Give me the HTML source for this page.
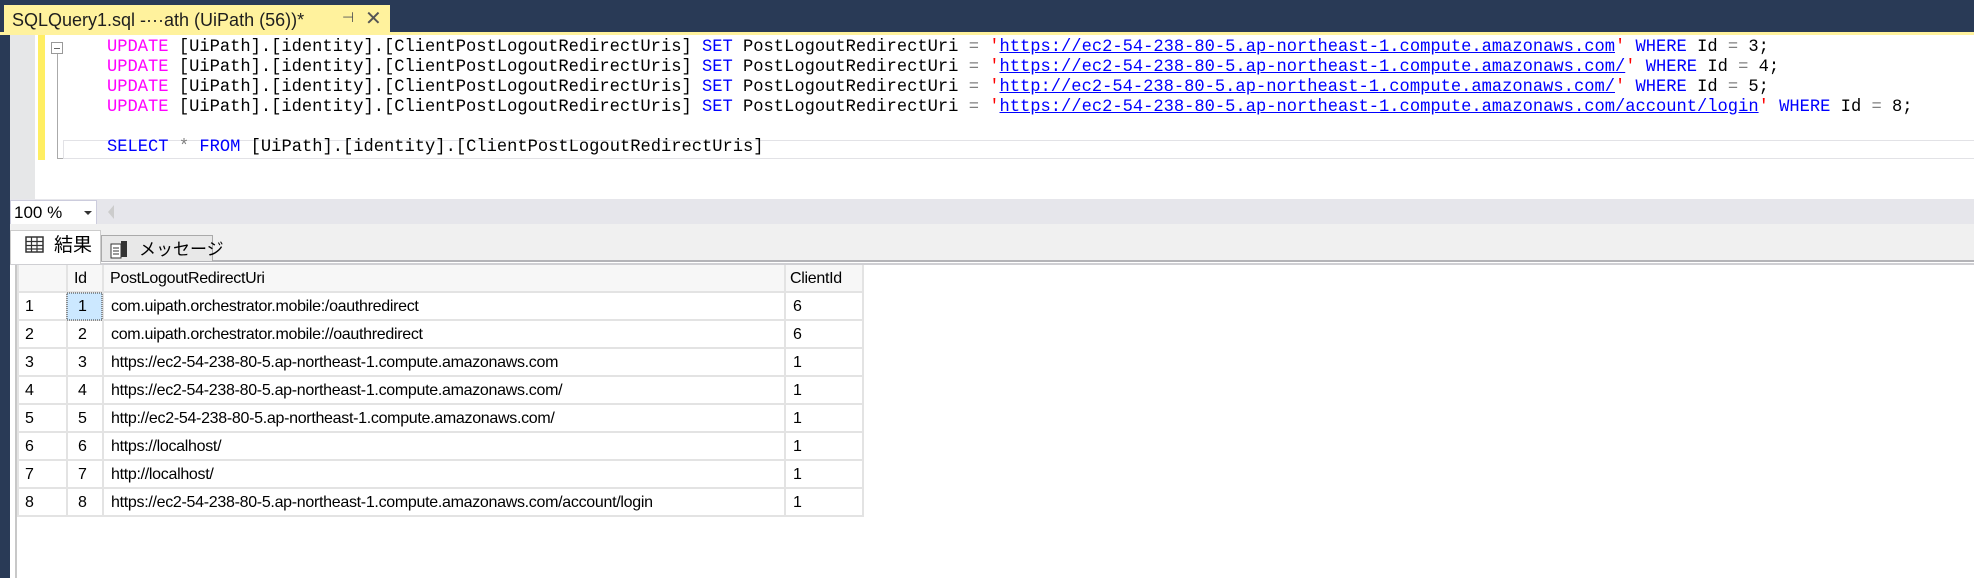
<!DOCTYPE html>
<html><head><meta charset="utf-8"><style>
*{margin:0;padding:0;box-sizing:border-box}
body{width:1974px;height:578px;position:relative;overflow:hidden;background:#fff;font-family:"Liberation Sans","Noto Sans CJK JP",sans-serif}
.a{position:absolute}
.code{position:absolute;left:107px;font-family:"Liberation Mono",monospace;font-size:17.1px;line-height:20px;white-space:pre;color:#000}
.k{color:#0000ff}.m{color:#ff00ff}.r{color:#ff0000}.u{color:#0000ff;text-decoration:underline}.g{color:#808080}
.cell{position:absolute;font-size:16px;line-height:27px;color:#000;white-space:nowrap;letter-spacing:-0.3px}
</style></head><body>
<div class="a" style="left:0;top:0;width:1974px;height:34px;background:#293a56"></div>
<div class="a" style="left:0;top:0;width:10px;height:578px;background:#293a56"></div>
<div class="a" style="left:4px;top:5px;width:386px;height:30px;background:#fff29d"></div>
<div class="a" style="left:0;top:32px;width:1974px;height:3px;background:#fff29d"></div>
<div class="a" style="left:12px;top:8px;font-size:18px;line-height:24px;color:#1e1e1e;white-space:nowrap">SQLQuery1.sql -···ath (UiPath (56))*</div>
<div class="a" style="left:342px;top:9px;font-size:14px;color:#555">⊣</div>
<div class="a" style="left:365px;top:6px;font-size:20px;color:#555">✕</div>
<!-- editor -->
<div class="a" style="left:10px;top:35px;width:25px;height:164px;background:#e6e7e8"></div>
<div class="a" style="left:38px;top:35px;width:7px;height:125px;background:#ffee62"></div>
<div class="a" style="left:51px;top:42px;width:12px;height:12px;border:1px solid #999;background:#fff"></div>
<div class="a" style="left:54px;top:48px;width:6px;height:1px;background:#666"></div>
<div class="a" style="left:57px;top:54px;width:1px;height:104px;background:#aaa"></div>
<div class="a" style="left:57px;top:158px;width:6px;height:1px;background:#aaa"></div>
<div class="a" style="left:63px;top:140px;width:1911px;height:19px;border:1px solid #e2e2e6;border-right:none"></div>
<div class="code" style="top:38px"><span class="m">UPDATE</span> [UiPath].[identity].[ClientPostLogoutRedirectUris] <span class="k">SET</span> PostLogoutRedirectUri <span class="g">=</span> <span class="r">'</span><span class="u">https://ec2-54-238-80-5.ap-northeast-1.compute.amazonaws.com</span><span class="r">'</span> <span class="k">WHERE</span> Id <span class="g">=</span> 3;
<span class="m">UPDATE</span> [UiPath].[identity].[ClientPostLogoutRedirectUris] <span class="k">SET</span> PostLogoutRedirectUri <span class="g">=</span> <span class="r">'</span><span class="u">https://ec2-54-238-80-5.ap-northeast-1.compute.amazonaws.com/</span><span class="r">'</span> <span class="k">WHERE</span> Id <span class="g">=</span> 4;
<span class="m">UPDATE</span> [UiPath].[identity].[ClientPostLogoutRedirectUris] <span class="k">SET</span> PostLogoutRedirectUri <span class="g">=</span> <span class="r">'</span><span class="u">http://ec2-54-238-80-5.ap-northeast-1.compute.amazonaws.com/</span><span class="r">'</span> <span class="k">WHERE</span> Id <span class="g">=</span> 5;
<span class="m">UPDATE</span> [UiPath].[identity].[ClientPostLogoutRedirectUris] <span class="k">SET</span> PostLogoutRedirectUri <span class="g">=</span> <span class="r">'</span><span class="u">https://ec2-54-238-80-5.ap-northeast-1.compute.amazonaws.com/account/login</span><span class="r">'</span> <span class="k">WHERE</span> Id <span class="g">=</span> 8;

<span class="k">SELECT</span> <span class="g">*</span> <span class="k">FROM</span> [UiPath].[identity].[ClientPostLogoutRedirectUris]</div>
<!-- zoom bar -->
<div class="a" style="left:10px;top:199px;width:1964px;height:25px;background:#e6e6eb"></div>
<div class="a" style="left:10px;top:200px;width:87px;height:25px;background:#fff;border:1px solid #ccd"></div>
<div class="a" style="left:14px;top:202px;font-size:17px;line-height:21px">100 %</div>
<div class="a" style="left:84px;top:211px;width:0;height:0;border-left:4px solid transparent;border-right:4px solid transparent;border-top:4px solid #333"></div>
<div class="a" style="left:108px;top:205px;width:0;height:0;border-top:7px solid transparent;border-bottom:7px solid transparent;border-right:6px solid #ccc"></div>
<!-- tabs -->
<div class="a" style="left:10px;top:224px;width:1964px;height:37px;background:#f0f0f0"></div>
<div class="a" style="left:10px;top:260px;width:1964px;height:2px;background:#b4b4b8"></div>
<div class="a" style="left:10px;top:263px;width:1964px;height:2px;background:#cfcfd3"></div>
<div class="a" style="left:10px;top:230px;width:91px;height:34px;background:#fff;border:1px solid #ccc;border-bottom:none"></div>
<div class="a" style="left:101px;top:235px;width:112px;height:26px;background:#e8e8e8;border:1px solid #aaa;border-bottom:none"></div>
<svg class="a" style="left:25px;top:236px" width="20" height="18"><rect x="1" y="1" width="17" height="15" fill="#fff" stroke="#333" stroke-width="1.5"/><path d="M1 5.5H18M1 9.5H18M1 13H18M6.5 1V16M12 1V16" stroke="#333" stroke-width="1.2"/></svg>
<div class="a" style="left:54px;top:233px;font-size:19px;line-height:26px">結果</div>
<svg class="a" style="left:110px;top:240px" width="20" height="20"><rect x="1" y="4" width="10" height="14" fill="#fff" stroke="#333"/><path d="M3 8H9M3 11H9M3 14H9" stroke="#333"/><rect x="11" y="1" width="6" height="16" fill="#333"/></svg>
<div class="a" style="left:139px;top:238px;font-size:17px;line-height:24px">メッセージ</div>
<!-- grid -->
<div class="a" style="left:17px;top:265px;width:847px;height:252px;background:#fff"></div>
<svg class="a" style="left:17px;top:265px" width="850" height="254">
<rect x="0" y="0" width="846" height="27" fill="#f7f7f7"/>
<g stroke="#e3e3e3" stroke-width="2">
<path d="M1 0V252M50 0V252M86 0V252M768 0V252M846 0V252"/>
<path d="M0 27H846M0 55H846M0 83H846M0 111H846M0 139H846M0 167H846M0 195H846M0 223H846M0 251H846"/>
</g>
<rect x="50" y="28" width="35" height="27" fill="#cce8ff" stroke="#333" stroke-dasharray="1 1"/>
</svg>
<div class="cell" style="left:74px;top:265px">Id</div>
<div class="cell" style="left:110px;top:265px">PostLogoutRedirectUri</div>
<div class="cell" style="left:790px;top:265px">ClientId</div>
<div class="cell" style="left:25px;top:293px">1</div><div class="cell" style="left:78px;top:293px">1</div><div class="cell" style="left:111px;top:293px">com.uipath.orchestrator.mobile:/oauthredirect</div><div class="cell" style="left:793px;top:293px">6</div>
<div class="cell" style="left:25px;top:321px">2</div><div class="cell" style="left:78px;top:321px">2</div><div class="cell" style="left:111px;top:321px">com.uipath.orchestrator.mobile://oauthredirect</div><div class="cell" style="left:793px;top:321px">6</div>
<div class="cell" style="left:25px;top:349px">3</div><div class="cell" style="left:78px;top:349px">3</div><div class="cell" style="left:111px;top:349px">https://ec2-54-238-80-5.ap-northeast-1.compute.amazonaws.com</div><div class="cell" style="left:793px;top:349px">1</div>
<div class="cell" style="left:25px;top:377px">4</div><div class="cell" style="left:78px;top:377px">4</div><div class="cell" style="left:111px;top:377px">https://ec2-54-238-80-5.ap-northeast-1.compute.amazonaws.com/</div><div class="cell" style="left:793px;top:377px">1</div>
<div class="cell" style="left:25px;top:405px">5</div><div class="cell" style="left:78px;top:405px">5</div><div class="cell" style="left:111px;top:405px">http://ec2-54-238-80-5.ap-northeast-1.compute.amazonaws.com/</div><div class="cell" style="left:793px;top:405px">1</div>
<div class="cell" style="left:25px;top:433px">6</div><div class="cell" style="left:78px;top:433px">6</div><div class="cell" style="left:111px;top:433px">https://localhost/</div><div class="cell" style="left:793px;top:433px">1</div>
<div class="cell" style="left:25px;top:461px">7</div><div class="cell" style="left:78px;top:461px">7</div><div class="cell" style="left:111px;top:461px">http://localhost/</div><div class="cell" style="left:793px;top:461px">1</div>
<div class="cell" style="left:25px;top:489px">8</div><div class="cell" style="left:78px;top:489px">8</div><div class="cell" style="left:111px;top:489px">https://ec2-54-238-80-5.ap-northeast-1.compute.amazonaws.com/account/login</div><div class="cell" style="left:793px;top:489px">1</div>
<div class="a" style="left:15px;top:265px;width:2px;height:313px;background:#c8c8c8"></div>
</body></html>
